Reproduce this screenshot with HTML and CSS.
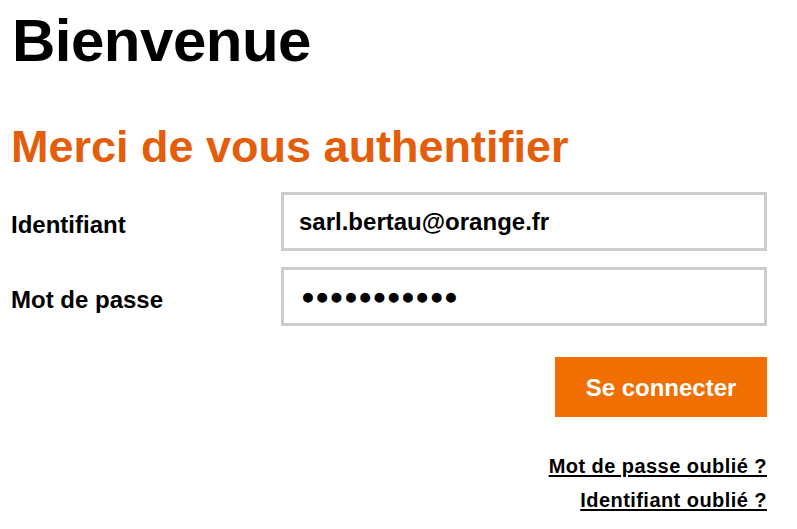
FILE: index.html
```html
<!DOCTYPE html>
<html lang="fr">
<head>
<meta charset="utf-8">
<title>Bienvenue</title>
<link rel="stylesheet" href="styles.css">
</head>
<body>
<main class="page">
  <h1 class="title">Bienvenue</h1>
  <h2 class="subtitle">Merci de vous authentifier</h2>
  <form class="login">
    <div class="field">
      <label class="label" for="login">Identifiant</label>
      <input class="input" id="login" type="text" value="sarl.bertau@orange.fr">
    </div>
    <div class="field">
      <label class="label" for="pwd">Mot de passe</label>
      <input class="input input--pwd" id="pwd" type="text" value="●●●●●●●●●●●" readonly>
    </div>
    <div class="actions">
      <button class="btn" type="button">Se connecter</button>
    </div>
    <div class="links">
      <a class="link" href="#">Mot de passe oublié ?</a>
      <a class="link" href="#">Identifiant oublié ?</a>
    </div>
  </form>
</main>
</body>
</html>
```
FILE: styles.css
```css
html, body {
  margin: 0;
  padding: 0;
  background: #fff;
}

body {
  font-family: "Liberation Sans", Arial, sans-serif;
  color: #000;
}

.page {
  padding: 0 30px 0 11px;
}

.title {
  margin: 6px 0 0 1px;
  font-size: 60px;
  line-height: 69px;
  font-weight: 700;
  letter-spacing: -0.5px;
}

.subtitle {
  margin: 46px 0 0;
  font-size: 45px;
  line-height: 52px;
  font-weight: 700;
  color: #e35d0a;
}

.login {
  margin: 19px 0 0;
  display: flex;
  flex-direction: column;
  gap: 16px;
}

.field {
  display: grid;
  grid-template-columns: 270px 1fr;
  align-items: start;
}

.label {
  padding-top: 19px;
  font-size: 24px;
  line-height: normal;
  font-weight: 700;
}

.input {
  box-sizing: border-box;
  width: 100%;
  height: 59px;
  margin: 0;
  padding: 0 15px;
  border: 3px solid #cccccc;
  border-radius: 0;
  background: #fff;
  font-family: "Liberation Sans", Arial, sans-serif;
  font-size: 24px;
  font-weight: 700;
  color: #000;
  outline: none;
}

.input--pwd {
  padding-left: 17px;
  font-size: 23px;
  letter-spacing: 0.4px;
}

.actions {
  display: flex;
  justify-content: flex-end;
  margin-top: 15px;
}

.btn {
  width: 212px;
  height: 60px;
  border: 0;
  border-radius: 0;
  background: #f16e00;
  color: #fff;
  font-family: "Liberation Sans", Arial, sans-serif;
  font-size: 24px;
  font-weight: 700;
  padding: 2px 0 0;
  cursor: pointer;
}

.links {
  margin-top: 16px;
  display: flex;
  flex-direction: column;
  align-items: flex-end;
}

.link {
  display: block;
  font-size: 20px;
  line-height: 34px;
  font-weight: 700;
  letter-spacing: 0.45px;
  color: #000;
  text-decoration: underline;
  text-decoration-thickness: 2px;
  text-underline-offset: 2px;
}
```
